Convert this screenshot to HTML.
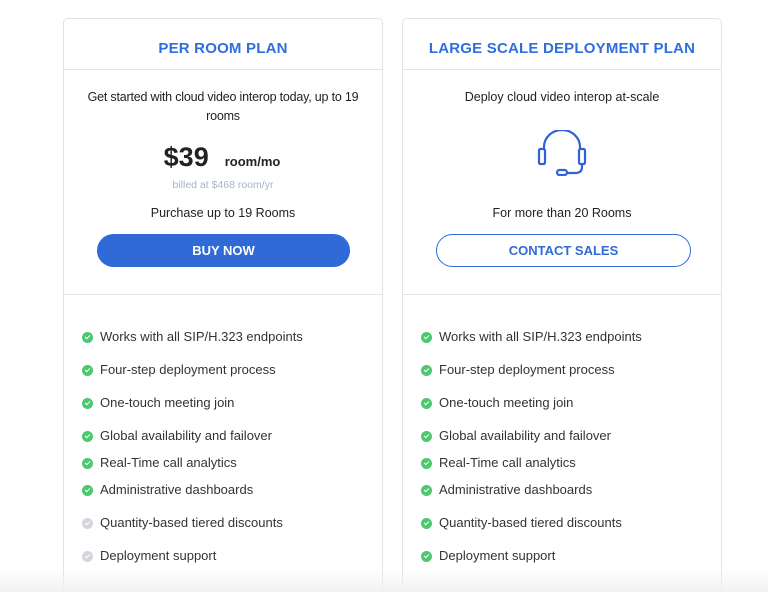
<!DOCTYPE html>
<html style="overflow:hidden;height:592px"><head><style>
body{margin:0;width:768px;height:592px;background:#fff;font-family:"Liberation Sans",sans-serif;position:relative;overflow:hidden}
.card{position:absolute;top:18px;width:318px;height:590px;border:1.5px solid #dfe3e8;border-radius:5px;background:#fff}
.hd{position:absolute;left:0;right:0;top:0;height:50px;border-bottom:1.5px solid #e1e5ea;text-align:center;line-height:60px;color:#2f6fdc;font-weight:bold;font-size:15px;letter-spacing:0.2px}
.mid{position:absolute;left:0;right:0;top:51px;height:224px;border-bottom:1.5px solid #e1e5ea}
.c{position:absolute;left:0;right:0;text-align:center;color:#222;font-size:12.5px}
.btn{position:absolute;left:33px;width:253px;height:33px;border-radius:17px;text-align:center;line-height:33px;font-weight:bold;font-size:13px}
.f{position:absolute;left:36px;font-size:13px;color:#333;white-space:nowrap}
.f i{position:absolute;left:-18px;top:3px;width:11px;height:11px;border-radius:50%;background:#4cc86e}
.f i:after{content:"";position:absolute;left:3px;top:2.5px;width:4px;height:2px;border-left:1.5px solid #fff;border-bottom:1.5px solid #fff;transform:rotate(-45deg)}
.f i.g{background:#d3d7dc}
.fade{position:absolute;left:0;right:0;bottom:0;height:22px;background:linear-gradient(#fff0,#f2f2f2)}
</style></head><body>
<div class="card" style="left:63px">
 <div class="hd">PER ROOM PLAN</div>
 <div class="mid">
  <div class="c" style="top:18px;line-height:19px;padding:0 8px;letter-spacing:-0.2px">Get started with cloud video interop today, up to 19 rooms</div>
  <div class="c" style="top:72px;font-size:13px;font-weight:bold"><span style="font-size:27px;margin-right:14px;position:relative;left:-2px">$39</span>room/mo</div>
  <div class="c" style="top:109px;font-size:10.5px;color:#a7b4c8">billed at $468 room/yr</div>
  <div class="c" style="top:136px">Purchase up to 19 Rooms</div>
  <div class="btn" style="top:164px;background:#2f6ad6;color:#fff">BUY NOW</div>
 </div>
 <div class="f" style="top:310px"><i></i>Works with all SIP/H.323 endpoints</div>
 <div class="f" style="top:343px"><i></i>Four-step deployment process</div>
 <div class="f" style="top:376px"><i></i>One-touch meeting join</div>
 <div class="f" style="top:409px"><i></i>Global availability and failover</div>
 <div class="f" style="top:436px"><i></i>Real-Time call analytics</div>
 <div class="f" style="top:463px"><i></i>Administrative dashboards</div>
 <div class="f" style="top:496px"><i class="g"></i>Quantity-based tiered discounts</div>
 <div class="f" style="top:529px"><i class="g"></i>Deployment support</div>
</div>
<div class="card" style="left:402px">
 <div class="hd">LARGE SCALE DEPLOYMENT PLAN</div>
 <div class="mid">
  <div class="c" style="top:18px;line-height:19px">Deploy cloud video interop at-scale</div>
  <svg style="position:absolute;left:134px;top:60px" width="50" height="46" viewBox="0 0 50 46" fill="none" stroke="#2f62d6" stroke-width="2.2">
   <path d="M7 20 V17 A18 17 0 0 1 43 17 V20"/>
   <rect x="2" y="19" width="6" height="15" rx="1.5"/>
   <rect x="42" y="19" width="6" height="15" rx="1.5"/>
   <path d="M45 34 V37 Q45 43 38 43 H30"/>
   <rect x="20" y="40" width="10" height="5" rx="2.5"/>
  </svg>
  <div class="c" style="top:136px">For more than 20 Rooms</div>
  <div class="btn" style="top:164px;border:1.5px solid #2f6ad6;height:31px;line-height:31px;color:#2f6ad6;background:#fff">CONTACT SALES</div>
 </div>
 <div class="f" style="top:310px"><i></i>Works with all SIP/H.323 endpoints</div>
 <div class="f" style="top:343px"><i></i>Four-step deployment process</div>
 <div class="f" style="top:376px"><i></i>One-touch meeting join</div>
 <div class="f" style="top:409px"><i></i>Global availability and failover</div>
 <div class="f" style="top:436px"><i></i>Real-Time call analytics</div>
 <div class="f" style="top:463px"><i></i>Administrative dashboards</div>
 <div class="f" style="top:496px"><i></i>Quantity-based tiered discounts</div>
 <div class="f" style="top:529px"><i></i>Deployment support</div>
</div>
<div class="fade"></div>
</body></html>
